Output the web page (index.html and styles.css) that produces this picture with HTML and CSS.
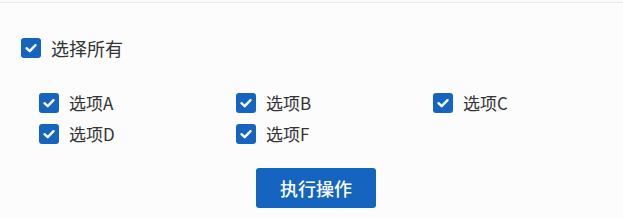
FILE: index.html
```html
<!DOCTYPE html>
<html lang="zh">
<head>
<meta charset="utf-8">
<link rel="stylesheet" href="styles.css">
</head>
<body>
<div class="page">
  <label class="check all">
    <span class="box"><svg viewBox="0 0 20 20"><path d="M5.5 10.2 L8.7 13.2 L14.5 7.2" /></svg></span>
    <span class="lbl">选择所有</span>
  </label>
  <div class="grid">
    <label class="check"><span class="box"><svg viewBox="0 0 20 20"><path d="M5.5 10.2 L8.7 13.2 L14.5 7.2" /></svg></span><span class="lbl">选项A</span></label>
    <label class="check"><span class="box"><svg viewBox="0 0 20 20"><path d="M5.5 10.2 L8.7 13.2 L14.5 7.2" /></svg></span><span class="lbl">选项B</span></label>
    <label class="check"><span class="box"><svg viewBox="0 0 20 20"><path d="M5.5 10.2 L8.7 13.2 L14.5 7.2" /></svg></span><span class="lbl">选项C</span></label>
    <label class="check"><span class="box"><svg viewBox="0 0 20 20"><path d="M5.5 10.2 L8.7 13.2 L14.5 7.2" /></svg></span><span class="lbl">选项D</span></label>
    <label class="check"><span class="box"><svg viewBox="0 0 20 20"><path d="M5.5 10.2 L8.7 13.2 L14.5 7.2" /></svg></span><span class="lbl">选项F</span></label>
  </div>
  <div class="actions">
    <button class="btn">执行操作</button>
  </div>
</div>
</body>
</html>
```
FILE: styles.css
```css
html, body {
  margin: 0;
  padding: 0;
  background: #fcfcfc;
}
body {
  font-family: "Noto Sans CJK SC", "Noto Sans", sans-serif;
  color: #333;
}
.page {
  border-top: 1px solid #ececec;
  margin-top: 2px;
  padding: 35px 12px 0 21px;
}
.check {
  display: flex;
  align-items: center;
  height: 20px;
}
.box {
  width: 20px;
  height: 20px;
  border-radius: 3px;
  background: #1565c0;
  display: flex;
  flex: none;
}
.box svg {
  width: 20px;
  height: 20px;
}
.box path {
  fill: none;
  stroke: #fff;
  stroke-width: 2.4;
  stroke-linecap: round;
  stroke-linejoin: round;
}
.lbl {
  margin-left: 10px;
  font-size: 17px;
  line-height: 20px;
}
.all .lbl {
  font-size: 18px;
}
.grid {
  margin: 35px 0 0 18px;
  display: grid;
  grid-template-columns: repeat(3, 197px);
  row-gap: 11px;
}
.actions {
  display: flex;
  justify-content: center;
  margin-top: 24px;
}
.btn {
  width: 120px;
  height: 40px;
  border: none;
  border-radius: 3px;
  background: #1565c0;
  color: #fff;
  font-family: "Noto Sans CJK SC", sans-serif;
  font-size: 18px;
  font-weight: 500;
  padding: 0;
}
```
